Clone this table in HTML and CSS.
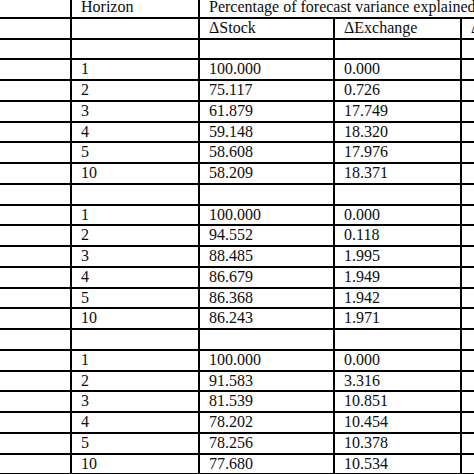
FILE: index.html
```html
<!DOCTYPE html>
<html lang="en">
<head>
<meta charset="utf-8">
<title>Forecast variance decomposition</title>
<link rel="stylesheet" href="styles.css">
</head>
<body>
<div class="frame">
<table class="tbl">
<colgroup>
<col class="c0"><col class="c1"><col class="c2"><col class="c3"><col class="c4">
</colgroup>
<tbody>
<tr><td></td><td>Horizon</td><td colspan="3">Percentage of forecast variance explained</td></tr>
<tr><td></td><td></td><td>&Delta;Stock</td><td>&Delta;Exchange</td><td>&Delta;Interest</td></tr>
<tr><td></td><td></td><td></td><td></td><td></td></tr>
<tr><td></td><td>1</td><td>100.000</td><td>0.000</td><td></td></tr>
<tr><td></td><td>2</td><td>75.117</td><td>0.726</td><td></td></tr>
<tr><td></td><td>3</td><td>61.879</td><td>17.749</td><td></td></tr>
<tr><td></td><td>4</td><td>59.148</td><td>18.320</td><td></td></tr>
<tr><td></td><td>5</td><td>58.608</td><td>17.976</td><td></td></tr>
<tr><td></td><td>10</td><td>58.209</td><td>18.371</td><td></td></tr>
<tr><td></td><td></td><td></td><td></td><td></td></tr>
<tr><td></td><td>1</td><td>100.000</td><td>0.000</td><td></td></tr>
<tr><td></td><td>2</td><td>94.552</td><td>0.118</td><td></td></tr>
<tr><td></td><td>3</td><td>88.485</td><td>1.995</td><td></td></tr>
<tr><td></td><td>4</td><td>86.679</td><td>1.949</td><td></td></tr>
<tr><td></td><td>5</td><td>86.368</td><td>1.942</td><td></td></tr>
<tr><td></td><td>10</td><td>86.243</td><td>1.971</td><td></td></tr>
<tr><td></td><td></td><td></td><td></td><td></td></tr>
<tr><td></td><td>1</td><td>100.000</td><td>0.000</td><td></td></tr>
<tr><td></td><td>2</td><td>91.583</td><td>3.316</td><td></td></tr>
<tr><td></td><td>3</td><td>81.539</td><td>10.851</td><td></td></tr>
<tr><td></td><td>4</td><td>78.202</td><td>10.454</td><td></td></tr>
<tr><td></td><td>5</td><td>78.256</td><td>10.378</td><td></td></tr>
<tr><td></td><td>10</td><td>77.680</td><td>10.534</td><td></td></tr>
</tbody>
</table>
</div>
</body>
</html>
```
FILE: styles.css
```css
body {
  margin: 0;
  background: #fff;
}
.frame {
  width: 474px;
  height: 474px;
  overflow: hidden;
}
.tbl {
  border-collapse: collapse;
  table-layout: fixed;
  width: 610px;
  margin: -4px 0 0 -30px;
  font: 16px/18.75px "Liberation Serif", "Times New Roman", serif;
  color: #0d0d0d;
}
.tbl tr {
  height: 20.75px;
}
.c0 { width: 100px; }
.c1 { width: 128px; }
.c2 { width: 135px; }
.c3 { width: 127px; }
.c4 { width: 120px; }
.tbl td {
  border: 2px solid #000;
  padding: 0 9px;
  white-space: nowrap;
  overflow: hidden;
  vertical-align: top;
}
```
